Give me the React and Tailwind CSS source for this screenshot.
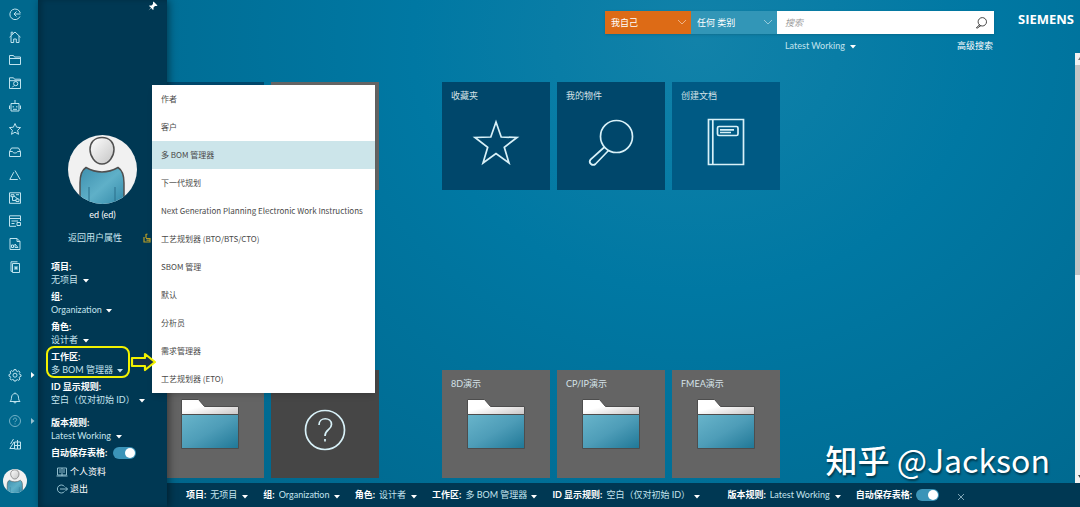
import { useState } from 'react';

const WORKSPACES = [
  '作者',
  '客户',
  '多 BOM 管理器',
  '下一代规划',
  'Next Generation Planning Electronic Work Instructions',
  '工艺规划器 (BTO/BTS/CTO)',
  'SBOM 管理',
  '默认',
  '分析员',
  '需求管理器',
  '工艺规划器 (ETO)',
];

const RAIL_TOP = [
  { label: '返回', d: 'M11 8.5A5.3 5.3 0 1 1 11.3 5M11.5 6H5M7.5 3.5 5 6l2.5 2.5' },
  { label: '主页', d: 'M.5 6.2 6 1l5.5 5.2M2 5v6.5h2.7V8h2.6v3.5H10V5M2.2 4.4V1.2h1.6v1.6' },
  { label: '文件夹', d: 'M.5 10.5v-9h4l1 1.5h6v7.5zM.5 4.5h11' },
  { label: '搜索文件夹', d: 'M.5 11.5V.8h4l1 1.4h6v9.3zM.5 3.7h11M5.2 8.4l-2 2M8.8 6.6a2.1 2.1 0 1 1-4.2 0 2.1 2.1 0 0 1 4.2 0' },
  { label: '助手', d: 'M2 3.5h8V11H2zM6 3.5V0M.5 5.500V9M11.500 5.500V9M4.200 6v1.500M7.800 6v1.500M4 9.300h4' },
  { label: '收藏', d: 'M6 .5l1.600 3.700 4 .4-3 2.700.9 4L6 9.200l-3.500 2.100.9-4-3-2.700 4-.4z' },
  { label: '收件箱', d: 'M.5 5.500 2.500 2h7l2 3.500v5H.5zM.5 5.500h3c.4 2 4.600 2 5 0h3' },
  { label: '更改', d: 'M4.800 3.200.8 10.500h8M6 1.500l5.200 9' },
  { label: '图表', d: 'M.5.800h11v10.500H.5zM2 2.700h3v2H2zM7 7h3v2.500H7zM3.500 4.700v3.800H7M5 4l4 3M7 2.700h3' },
  { label: '报表', d: 'M.5 11.300V.800h11V6M.5 3.500h11M.5 11.300H7M2.500 6H9M2.500 8.500h3M8 7.500h3.500v3H8z' },
  { label: '图像', d: 'M1 11.500V.5h7L11 3.500v8zM8 .5v3h3M2.500 9.500V7h2v2.500zM6 9.500V6l3 3.500z' },
  { label: '新建文档', d: 'M2 .8h6.500M2 .8v9.500h1.500M3.500 2.500h7v9h-7zM7 5v4M5 7h4M5.600 5.600l2.800 2.800M8.400 5.600 5.600 8.400' },
];

const RAIL_BOTTOM = [
  { label: '设置', flyout: true, d: 'M5 .6h2l.3 1.500 1 .5 1.400-.8 1.300 1.400-.7 1.300.4 1 1.300.3v1.600l-1.400.4-.4 1 .8 1.300L9.700 11.400l-1.400-.8-1 .4L7 12H5l-.3-1.200-1-.4-1.400.7L1 9.800l.7-1.300-.4-1L0 7.200V5.500l1.400-.4.4-1L1 2.900l1.300-1.300 1.400.8 1-.4zM8 6.200a2 2 0 1 1-4 0 2 2 0 0 1 4 0' },
  { label: '通知', d: 'M1 9.500c2-1.500 1-4 2-6C4 1 8 1 9 3.500c1 2 0 4.500 2 6zM4.700 9.800c.3 1.600 2.300 1.600 2.600 0M6 1.500V.5' },
  { label: '帮助', flyout: true, dim: true, d: 'M11.500 6a5.500 5.500 0 1 1-11 0 5.500 5.500 0 0 1 11 0M4.300 4.800c0-2.400 3.400-2.200 3.400-.2C7.700 6 6 5.800 6 7.200M6 8.500v.8' },
  { label: '测量', d: 'M5 4 .8 10.500h4.700M4.500 1 1.500 6M5.500 4h6v7h-6zM8.500 2v9M5.500 7.500h6' },
];

function Caret() {
  return (
    <svg viewBox="0 0 6 4" className="w-[6px] h-1 shrink-0 mt-[3px] pointer-events-none" fill="currentColor">
      <path d="M0 0h6L3 3.500z" />
    </svg>
  );
}

function Chevron() {
  return (
    <svg viewBox="0 0 10 6" className="absolute right-1 top-2 w-[10px] h-[6px] pointer-events-none" fill="none" stroke="#ffffffa0" strokeWidth="0.8">
      <path d="M1 1l4 4 4-4" />
    </svg>
  );
}

function Picker({ id, label, value }) {
  return (
    <span className="flex items-center gap-1">
      <select id={id} aria-label={label} className="appearance-none bg-transparent text-[#c4e4ee] outline-none">
        <option>{value}</option>
      </select>
      <Caret />
    </span>
  );
}

function Field({ id, label, value }) {
  return (
    <div className="leading-[13px]">
      <label htmlFor={id} className="block font-bold">{label}:</label>
      <Picker id={id} value={value} />
    </div>
  );
}

function FooterField({ id, label, value }) {
  return (
    <div className="flex items-center gap-1">
      <label htmlFor={id} className="font-bold whitespace-nowrap">{label}:</label>
      <Picker id={id} value={value} />
    </div>
  );
}

function Switch({ id, checked, onChange }) {
  return (
    <input
      id={id}
      type="checkbox"
      role="switch"
      checked={checked}
      onChange={(e) => onChange(e.target.checked)}
      className="appearance-none flex items-center w-[23px] h-3 px-px rounded-full bg-[#5b7482] checked:bg-[#3b94b8] checked:justify-end before:block before:w-[10px] before:h-[10px] before:rounded-full before:bg-white"
    />
  );
}

function Avatar({ className }) {
  return (
    <svg viewBox="0 0 69 69" className={className}>
      <defs>
        <linearGradient id="shirt" x1="0" y1="0" x2="1" y2="1">
          <stop offset="0" stopColor="#3d8fae" />
          <stop offset="0.5" stopColor="#5fb0c8" />
          <stop offset="1" stopColor="#2f86a6" />
        </linearGradient>
        <linearGradient id="face" x1="0" y1="0" x2="1" y2="1">
          <stop offset="0" stopColor="#ffffff" />
          <stop offset="1" stopColor="#c4c4c4" />
        </linearGradient>
        <clipPath id="disc">
          <circle cx="34.500" cy="34.500" r="34.500" />
        </clipPath>
      </defs>
      <g clipPath="url(#disc)" stroke="#4f4f4f" strokeWidth="1.500">
        <rect width="69" height="69" fill="#f1f1f1" stroke="none" />
        <path d="M12 72V48c0-9 2-13 6-15.500q16 9 32 0c4 2.500 6 6.500 6 15.500v24z" fill="url(#shirt)" />
        <path d="M21 52v20M47 52v20" stroke="#2a6f8a" strokeWidth="1" />
        <path d="M34 2.500c8 0 12 5.500 12 12S41 29 34 29 22 21 22 14.500 26 2.500 34 2.500z" fill="url(#face)" />
      </g>
    </svg>
  );
}

function FolderIcon() {
  return (
    <svg viewBox="0 0 58 50" className="w-[58px] h-[50px]" stroke="#4d4d4d">
      <defs>
        <linearGradient id="folderFront" x1="0" y1="0" x2="1" y2="1">
          <stop offset="0" stopColor="#69b5cb" />
          <stop offset="0.5" stopColor="#4e9db8" />
          <stop offset="1" stopColor="#1f7796" />
        </linearGradient>
        <linearGradient id="folderBack" x1="0" y1="0" x2="1" y2="1">
          <stop offset="0.400" stopColor="#ffffff" />
          <stop offset="1" stopColor="#c9c5c5" />
        </linearGradient>
      </defs>
      <path d="M.5.500h17l6 7h34v8H.5z" fill="url(#folderBack)" />
      <path d="M.5 15.500h57v34H.5z" fill="url(#folderFront)" />
    </svg>
  );
}

const GLYPHS = {
  star: 'M23 3l5.200 15 15.800.5-12.700 9.700 4.700 15.800L23 34.500 10 44l4.700-15.800L2 18.500l15.800-.5z',
  search: 'M44.500 17.500a16 16 0 1 1-32 0 16 16 0 0 1 32 0M16.500 28 2.500 40.500c-2.500 3.500 2 7 5 4.500L20.500 31.500',
  book: 'M5.500.500h35v45h-35zM9.800.500v45M16 7.500h17.500a1.500 1.500 0 0 1 1.500 1.500v6a1.500 1.500 0 0 1-1.500 1.500H16a1.500 1.500 0 0 1-1.500-1.500V9A1.500 1.500 0 0 1 16 7.500zM17 10.800h14M17 13.500h11',
  help: 'M42.500 23a19.500 19.500 0 1 1-39 0 19.500 19.500 0 0 1 39 0M17 18c0-8.500 12.500-8 12.500-.5 0 5.500-6.500 5-6.500 11.500M23 32v2.500',
};

function Glyph({ name }) {
  return (
    <svg viewBox="0 0 46 46" className="w-[46px] h-[46px] overflow-visible" fill="none" stroke="#d8f1f8" strokeWidth="1.700">
      <path d={GLYPHS[name]} />
    </svg>
  );
}

function Tile({ title, icon, color }) {
  const folder = icon === 'folder';
  return (
    <button type="button" className={`flex flex-col w-[108px] h-[108px] shrink-0 pt-2 text-left ${color}`}>
      <span className="h-3 pl-[9px] leading-3 text-[#d5e2e8]">{title}</span>
      <span className={`flex-1 flex items-center justify-center w-full ${folder ? 'pb-5' : 'pb-2'}`}>
        {folder ? <FolderIcon /> : icon && <Glyph name={icon} />}
      </span>
    </button>
  );
}

function RailButton({ item }) {
  return (
    <button type="button" aria-label={item.label} className={`flex items-center w-full h-[23px] pl-[9px] text-[#bfe3ee] ${item.dim ? 'opacity-60' : ''}`}>
      <svg viewBox="0 0 12 12" className="w-3 h-3 overflow-visible" fill="none" stroke="currentColor" strokeWidth="1">
        <path d={item.d} />
      </svg>
      {item.flyout && (
        <svg viewBox="0 0 4 6" className="w-1 h-[6px] ml-[10px]" fill="#ffffff">
          <path d="M0 0v6l3.500-3z" />
        </svg>
      )}
    </button>
  );
}

function Rail() {
  return (
    <nav className="relative z-10 flex flex-col w-[38px] shrink-0 pt-[2px] pb-[14px] bg-[#00688d]">
      {RAIL_TOP.map((item) => <RailButton key={item.label} item={item} />)}
      <div className="mt-auto">
        {RAIL_BOTTOM.map((item) => <RailButton key={item.label} item={item} />)}
      </div>
      <button type="button" aria-label="用户" className="mt-[14px] ml-[3px] w-6 h-6">
        <Avatar className="w-6 h-6" />
      </button>
    </nav>
  );
}

function ProfilePanel({ workspace, setWorkspace, autoSave, setAutoSave }) {
  return (
    <aside className="relative z-20 w-[129px] shrink-0 bg-[#003853] shadow-[2px_0_8px_#00000070,inset_4px_0_5px_#00000030]">
      <button type="button" aria-label="固定" className="block ml-auto mr-[9px] h-3">
        <svg viewBox="0 0 10 10" className="w-[10px] h-[10px]" fill="#ffffff">
          <path d="M5.500.500 9.500 4.500 8.500 5 7 5 5.500 6.500v2L5 9 3.200 7 .5 9.500 3 6.500 1 5l.5-.5h2L5 3V1.500z" />
        </svg>
      </button>
      <div className="flex flex-col items-center pt-[123px]">
        <Avatar className="w-[69px] h-[69px]" />
        <p className="mt-1 leading-[13px]">ed (ed)</p>
      </div>
      <div className="flex items-center mt-[10px] pl-[30px] h-[13px]">
        <a href="#properties" className="text-[#c9e6ef]">返回用户属性</a>
        <svg viewBox="0 0 8 10" className="w-2 h-[10px] ml-auto mr-4" fill="none" stroke="#b79d27" strokeWidth="1.200">
          <path d="M4.500 1 3 1.500V5M1 4v5h6V5.500H3M3.500 7.200H7" />
        </svg>
      </div>

      <div className="flex flex-col gap-1 mt-4 pl-[13px]">
        <Field id="project" label="项目" value="无项目" />
        <Field id="group" label="组" value="Organization" />
        <Field id="role" label="角色" value="设计者" />
        <div className="relative leading-[13px]">
          <span id="workspace-label" className="block font-bold">工作区:</span>
          <button type="button" aria-haspopup="listbox" aria-labelledby="workspace-label" className="flex items-center gap-1 h-[13px] text-[#c4e4ee] whitespace-nowrap">
            {workspace}
            <Caret />
          </button>
          <div className="absolute -left-[5px] -top-1 z-30 flex items-center pointer-events-none">
            <div className="w-[84px] h-8 border-2 border-[#f2f200] rounded-lg" />
            <svg viewBox="0 0 27 20" className="w-[27px] h-5" fill="#17324a" stroke="#f2f200" strokeWidth="2.200" strokeLinejoin="round">
              <path d="M2 6h13V2l10 8-10 8v-4H2z" />
            </svg>
          </div>
        </div>
        <Field id="idRule" label="ID 显示规则" value="空白（仅对初始 ID）" />
      </div>
      <div className="mt-[10px] pl-[13px]">
        <Field id="revision" label="版本规则" value="Latest Working" />
        <div className="flex items-center gap-[6px] mt-1 leading-[13px]">
          <label htmlFor="autoSave" className="font-bold">自动保存表格:</label>
          <Switch id="autoSave" checked={autoSave} onChange={setAutoSave} />
        </div>
      </div>
      <div className="flex flex-col gap-1 mt-[6px] pl-[18px] leading-[13px]">
        <a href="#profile" className="flex items-center gap-[2px]">
          <svg viewBox="0 0 12 10" className="w-3 h-[10px]" fill="none" stroke="#9fcbd9" strokeWidth="0.900">
            <path d="M1.500 1h9v7h-9zM6 1v8M3 3h2M3 5h2M7 3h2M7 5h2M.5 9h11" />
          </svg>
          个人资料
        </a>
        <a href="#logout" className="flex items-center gap-[2px]">
          <svg viewBox="0 0 12 10" className="w-3 h-[10px]" fill="none" stroke="#9fcbd9" strokeWidth="0.900">
            <path d="M8.500 2.500a4 4 0 1 0 0 5M4 5h7.500M9.500 3l2 2-2 2" />
          </svg>
          退出
        </a>
      </div>

      <ul role="listbox" aria-labelledby="workspace-label" className="absolute left-[114px] top-[85px] w-[223px] bg-white text-[8px] text-[#4a4a4a] font-['Noto_Sans_CJK_SC',sans-serif] shadow-md">
        {WORKSPACES.map((name) => (
          <li
            key={name}
            role="option"
            aria-selected={name === workspace}
            onClick={() => setWorkspace(name)}
            className={`flex items-center h-7 pl-[9px] whitespace-nowrap cursor-pointer ${name === workspace ? 'bg-[#cce5ea]' : ''}`}
          >
            {name}
          </li>
        ))}
      </ul>
    </aside>
  );
}

function Header() {
  return (
    <header className="flex justify-end gap-6 h-[53px] shrink-0 pt-[11px] pr-[6px]">
      <div className="w-[389px]">
        <div className="flex h-[23px] shadow-sm">
          <div className="relative w-[86px] bg-[#dd6b16]">
            <select aria-label="搜索范围" className="appearance-none w-full h-full pl-[6px] outline-none">
              <option>我自己</option>
            </select>
            <Chevron />
          </div>
          <div className="relative w-[86px] bg-[#3296b7]">
            <select aria-label="类别" className="appearance-none w-full h-full pl-[6px] outline-none">
              <option>任何 类别</option>
            </select>
            <Chevron />
          </div>
          <div className="flex flex-1 items-center pr-[7px] bg-white">
            <input type="search" aria-label="搜索" placeholder="搜索" className="flex-1 min-w-0 h-full pl-2 text-[#333333] placeholder:text-[#999999] placeholder:italic outline-none" />
            <button type="button" aria-label="执行搜索">
              <svg viewBox="0 0 12 12" className="w-3 h-3" fill="none" stroke="#333333" strokeWidth="0.900">
                <path d="M11.500 4.800a4.200 4.200 0 1 1-8.400 0 4.200 4.200 0 0 1 8.400 0M5 7.500 2.500 9.500q-2 1.800-.5 1.800L6 8.500" />
              </svg>
            </button>
          </div>
        </div>
        <div className="flex justify-between mt-[5px] pl-[180px] pr-px leading-[13px]">
          <Picker label="版本规则" value="Latest Working" />
          <a href="#advanced">高级搜索</a>
        </div>
      </div>
      <div className="w-14 h-4 text-[13px] leading-4 font-bold font-['Open_Sans',sans-serif]">SIEMENS</div>
    </header>
  );
}

function Scrollbar() {
  return (
    <div aria-hidden="true" className="flex flex-col w-[5px] shrink-0 bg-[#f1f1f1]">
      <svg viewBox="0 0 5 12" className="w-[5px] h-3" fill="#777777"><path d="M3 7l2-3v3z" /></svg>
      <div className="h-[210px] bg-[#c5c5c5]" />
      <svg viewBox="0 0 5 12" className="w-[5px] h-3 mt-auto" fill="#444444"><path d="M3 4h2v3z" /></svg>
    </div>
  );
}

function Footer({ autoSave, setAutoSave }) {
  return (
    <footer className="flex items-center gap-[15px] h-6 shrink-0 pl-[19px] bg-[#003853]">
      <FooterField id="footProject" label="项目" value="无项目" />
      <FooterField id="footGroup" label="组" value="Organization" />
      <FooterField id="footRole" label="角色" value="设计者" />
      <FooterField id="footWorkspace" label="工作区" value="多 BOM 管理器" />
      <FooterField id="footIdRule" label="ID 显示规则" value="空白（仅对初始 ID）" />
      <div className="ml-3">
        <FooterField id="footRevision" label="版本规则" value="Latest Working" />
      </div>
      <div className="flex items-center gap-1">
        <label htmlFor="footAutoSave" className="font-bold whitespace-nowrap">自动保存表格:</label>
        <Switch id="footAutoSave" checked={autoSave} onChange={setAutoSave} />
      </div>
      <button type="button" aria-label="关闭" className="ml-1 mt-1">
        <svg viewBox="0 0 6 6" className="w-[6px] h-[6px]" stroke="#8fb3c2" strokeWidth="0.900">
          <path d="M0 0l6 6M6 0 0 6" />
        </svg>
      </button>
    </footer>
  );
}

export default function App() {
  const [workspace, setWorkspace] = useState('多 BOM 管理器');
  const [autoSave, setAutoSave] = useState(true);

  return (
    <div className="flex h-screen overflow-hidden text-[9px] text-white font-[Lato,'Noto_Sans_CJK_SC',sans-serif]">
      <Rail />
      <ProfilePanel workspace={workspace} setWorkspace={setWorkspace} autoSave={autoSave} setAutoSave={setAutoSave} />
      <main className="relative flex flex-col flex-1 min-w-0 bg-[radial-gradient(ellipse_at_58%_8%,#1282a9_0%,#0078a3_38%,#00658a_100%)]">
        <Header />
        <div className="flex flex-1 min-h-0">
          <div className="flex flex-1 gap-[63px] min-w-0 overflow-hidden pt-[29px]">
            <div className="grid grid-cols-[108px_108px] content-start gap-x-[7px] gap-y-[180px] -ml-[11px]">
              <Tile color="bg-[#00476b]" />
              <Tile color="bg-[#646464]" />
              <Tile icon="folder" color="bg-[#646464]" />
              <Tile icon="help" color="bg-[#464646]" />
            </div>
            <div className="grid grid-cols-[108px_108px_108px] content-start gap-x-[7px] gap-y-[180px]">
              <Tile title="收藏夹" icon="star" color="bg-[#00476b]" />
              <Tile title="我的物件" icon="search" color="bg-[#00476b]" />
              <Tile title="创建文档" icon="book" color="bg-[#005a84]" />
              <Tile title="8D演示" icon="folder" color="bg-[#646464]" />
              <Tile title="CP/IP演示" icon="folder" color="bg-[#646464]" />
              <Tile title="FMEA演示" icon="folder" color="bg-[#646464]" />
            </div>
          </div>
          <Scrollbar />
        </div>
        <Footer autoSave={autoSave} setAutoSave={setAutoSave} />
        <p className="absolute right-[30px] bottom-7 text-[32px] leading-10 font-['Noto_Sans_CJK_SC',sans-serif] [text-shadow:1px_2px_2px_#00000080]">
          <span className="font-medium">知乎</span> @Jackson
        </p>
      </main>
    </div>
  );
}
